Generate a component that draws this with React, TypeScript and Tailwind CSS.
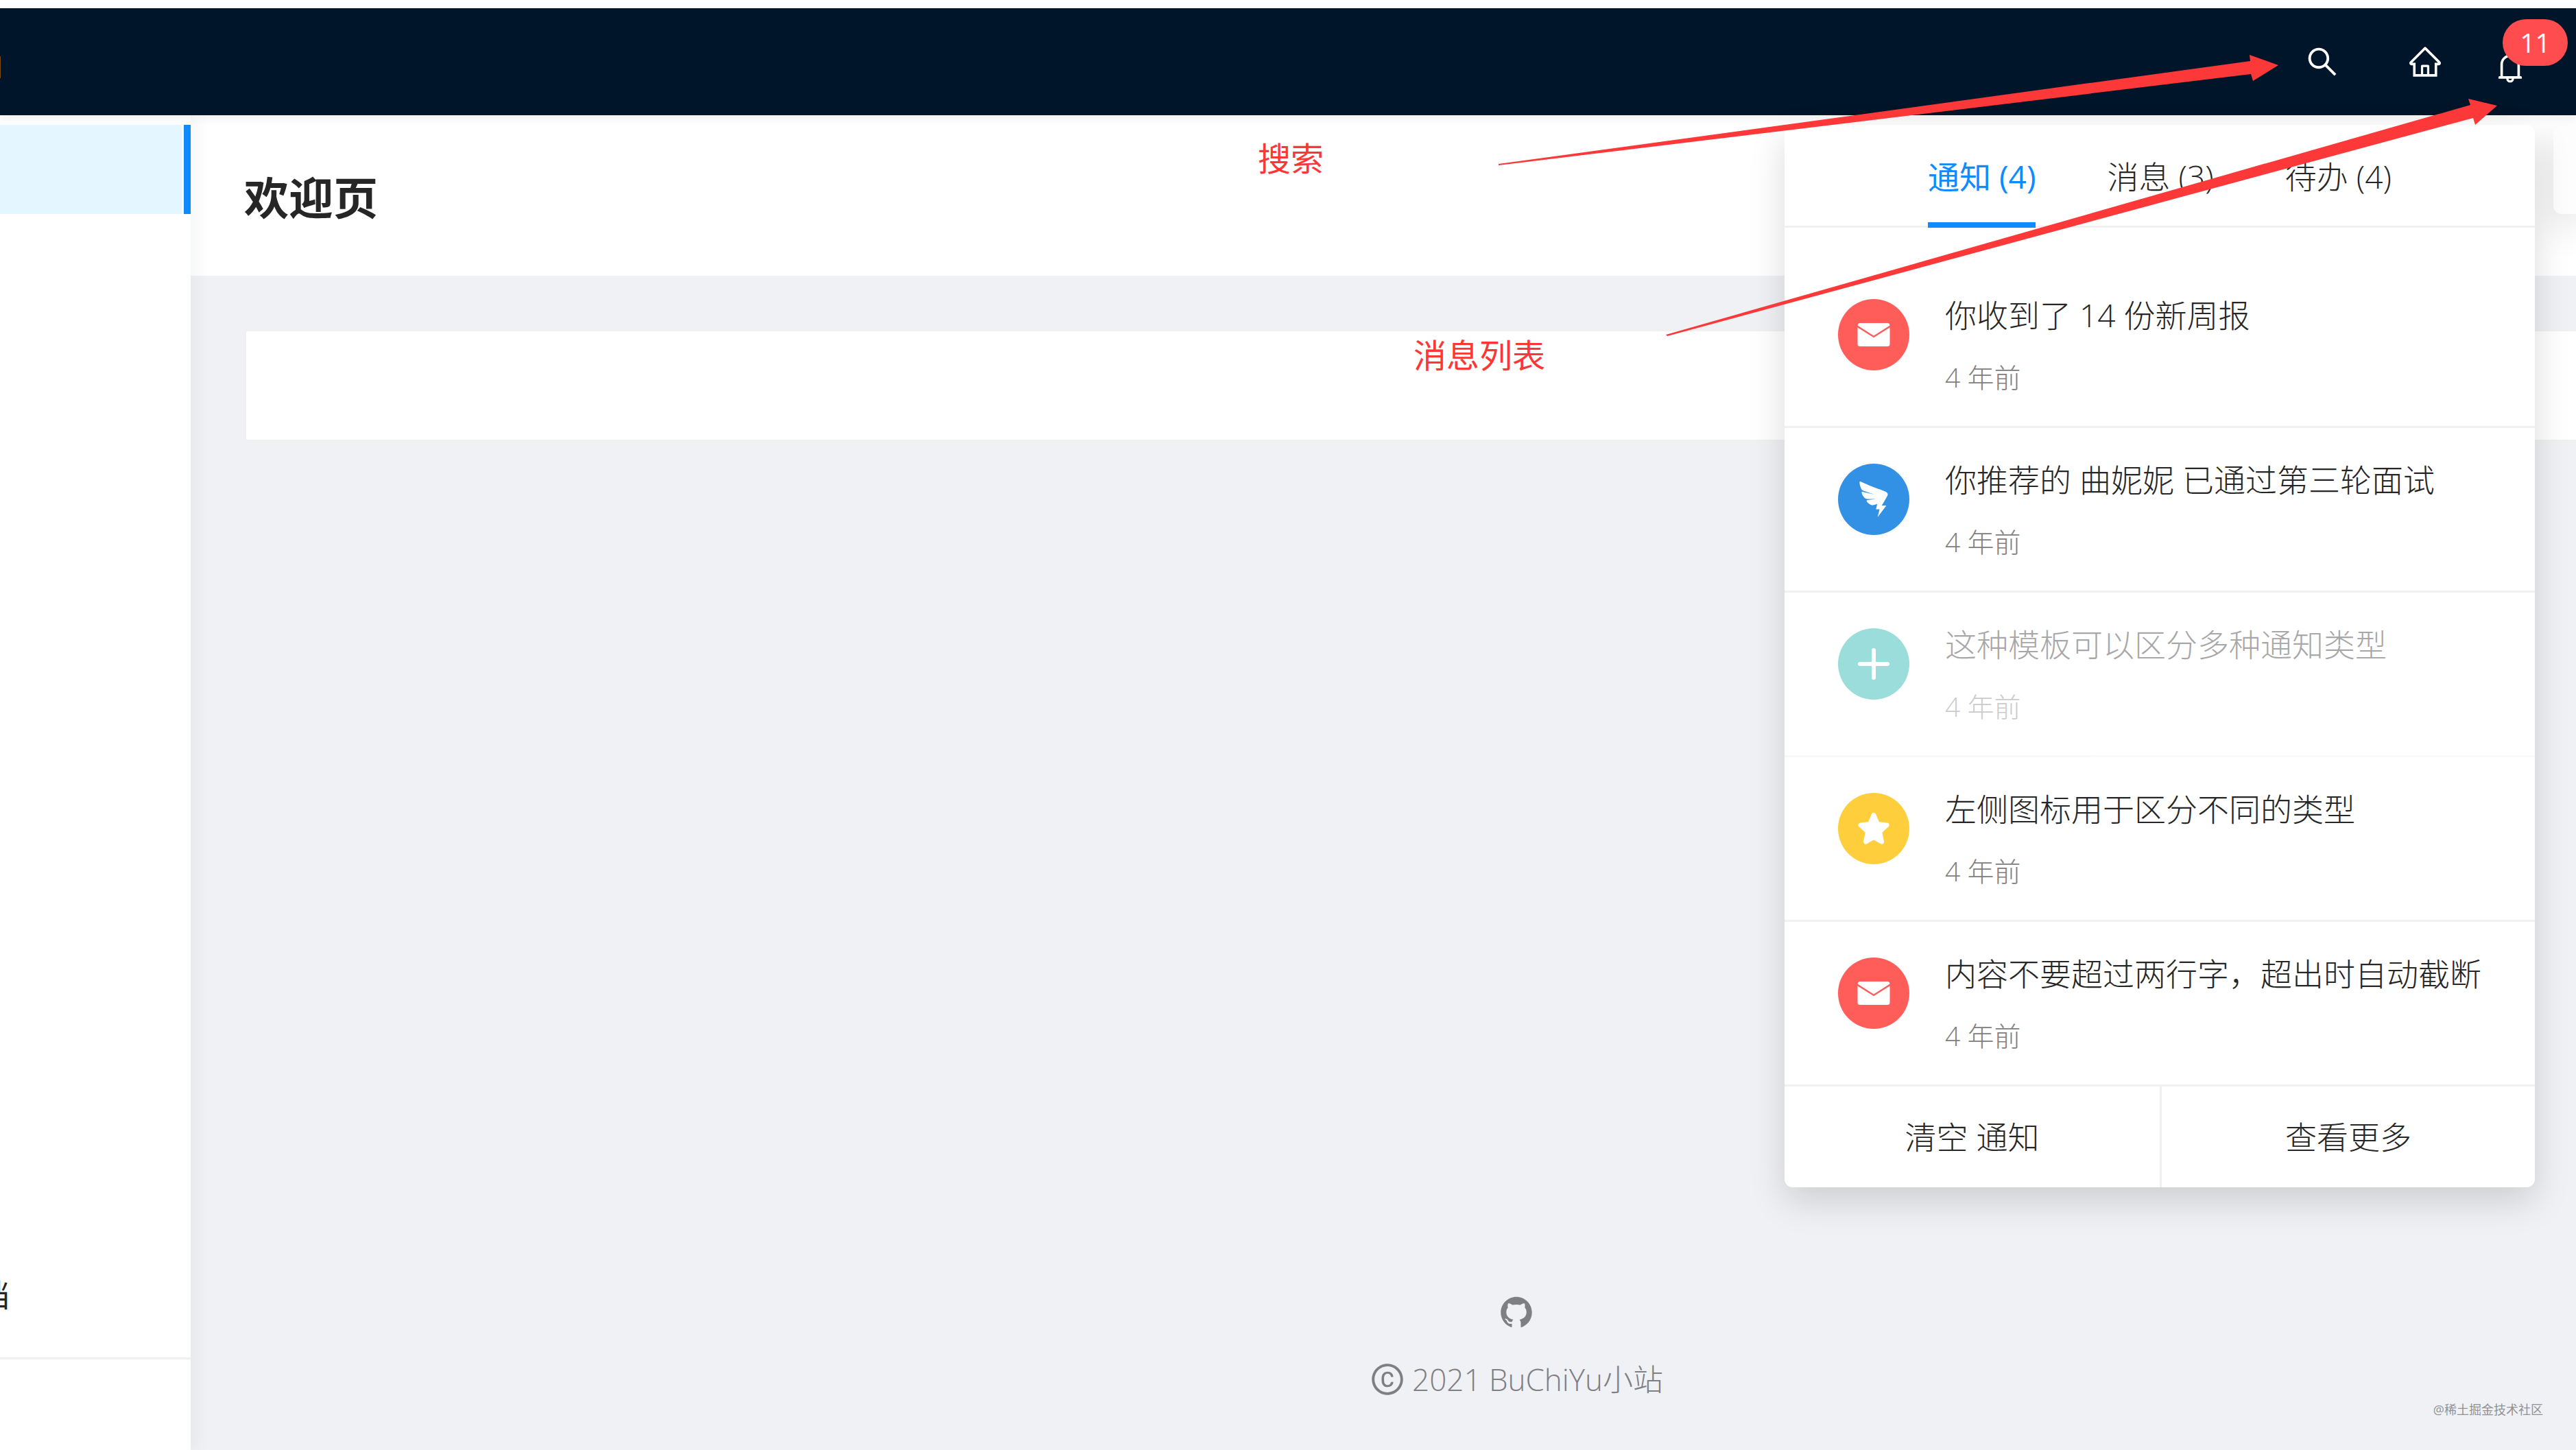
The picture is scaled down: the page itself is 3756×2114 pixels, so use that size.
import React from 'react';
import {
  AiFillGithub,
  AiOutlineBell,
  AiOutlineCopyright,
  AiOutlineDingding,
  AiOutlineHome,
  AiOutlineSearch,
} from 'react-icons/ai';

const MailIcon = () => (
  <svg viewBox="0 0 48 48" className="size-12" fill="#fff">
    <path d="M4 7h40a3.500 3.500 0 0 1 3.400 3.500L24 25.500 .6 10.500A3.500 3.500 0 0 1 4 7z" />
    <path d="M.5 13.500 24 28.300l23.500-14.800V37.500a3.500 3.500 0 0 1-3.500 3.500H4a3.500 3.500 0 0 1-3.500-3.500z" />
  </svg>
);

const PlusIcon = () => (
  <svg viewBox="0 0 48 48" className="size-12" stroke="#fff" strokeWidth="6" strokeLinecap="round">
    <path d="M24 4v40M4 24h40" />
  </svg>
);

const StarIcon = () => (
  <svg viewBox="0 0 48 48" className="size-12" fill="#fff" stroke="#fff" strokeWidth="7" strokeLinejoin="round">
    <path d="M24 4.500 29.500 17.500 43 19 32.500 28.500 35.500 43 24 36.500 12.500 43 15.500 28.500 5 19 18.500 17.500z" />
  </svg>
);

const DingIcon = () => <AiOutlineDingding className="size-16 text-white" />;

type Notice = {
  id: number;
  title: string;
  time: string;
  color: string;
  icon: React.FC;
  read?: boolean;
};

const notices: Notice[] = [
  { id: 1, title: '你收到了 14 份新周报', time: '4 年前', color: 'bg-[#ff5d5a]', icon: MailIcon },
  { id: 2, title: '你推荐的 曲妮妮 已通过第三轮面试', time: '4 年前', color: 'bg-[#3391e5]', icon: DingIcon },
  { id: 3, title: '这种模板可以区分多种通知类型', time: '4 年前', color: 'bg-[#05aca7]', icon: PlusIcon, read: true },
  { id: 4, title: '左侧图标用于区分不同的类型', time: '4 年前', color: 'bg-[#ffce3d]', icon: StarIcon },
  { id: 5, title: '内容不要超过两行字，超出时自动截断', time: '4 年前', color: 'bg-[#ff5d5a]', icon: MailIcon },
];

const tabs = ['通知 (4)', '消息 (3)', '待办 (4)'];

const NoticeItem: React.FC<{ notice: Notice }> = ({ notice }) => {
  const Icon = notice.icon;
  return (
    <li
      className={`flex gap-[52px] border-b-[3px] border-[#f0f0f0] px-[78px] pt-[39px] pb-[41px] last:border-b-0 ${
        notice.read ? 'opacity-40' : ''
      }`}
    >
      <span className={`mt-[13px] flex size-[104px] shrink-0 items-center justify-center rounded-full ${notice.color}`}>
        <Icon />
      </span>
      <div>
        <h4 className="mb-[25px] text-[46px] leading-[72px] font-light whitespace-nowrap text-[#262626]">{notice.title}</h4>
        <p className="text-[39px] leading-[60px] font-light text-[#808080]">{notice.time}</p>
      </div>
    </li>
  );
};

const NoticePanel = () => (
  <section className="absolute top-[182px] right-[60px] z-20 w-[1094px] rounded-xl bg-white shadow-[0_20px_52px_rgba(0,0,0,0.15)]">
    <nav className="flex justify-center gap-[104px] border-b-[3px] border-[#f0f0f0]">
      {tabs.map((tab, i) => (
        <button
          key={tab}
          className={`-mb-[3px] border-b-8 pt-[39px] pb-[31px] text-[46px] leading-[72px] ${
            i === 0 ? 'border-[#0d8bff] text-[#0d8bff]' : 'border-transparent font-light text-[#262626]'
          }`}
        >
          {tab}
        </button>
      ))}
    </nav>
    <ul className="pt-[52px]">
      {notices.map((n) => (
        <NoticeItem key={n.id} notice={n} />
      ))}
    </ul>
    <div className="grid grid-cols-2 border-t-[3px] border-[#f0f0f0] text-[46px] leading-[147px] font-light text-[#262626]">
      <button>清空 通知</button>
      <button className="border-l-[3px] border-[#f0f0f0]">查看更多</button>
    </div>
  </section>
);

const Header = () => (
  <header className="relative z-10 mt-3 flex h-[156px] items-center justify-between bg-[#001529] text-white shadow-[0_3px_13px_rgba(0,21,41,0.08)]">
    <span className="mt-4 h-8 w-px bg-[#7a4a10]" />
    <div className="flex items-center pr-[70px]">
      <button aria-label="搜索" className="mr-[98px]">
        <AiOutlineSearch className="size-[52px]" />
      </button>
      <a href="#home" aria-label="首页" className="mr-[72px]">
        <AiOutlineHome className="size-[52px]" />
      </a>
      <button aria-label="通知" className="relative pt-4">
        <AiOutlineBell className="size-[52px]" />
        <span className="absolute -top-7 left-[15px] w-[95px] rounded-full bg-[#ff4d4f] text-center text-[39px] leading-[68px] font-medium">
          11
        </span>
      </button>
    </div>
  </header>
);

const Sider = () => (
  <aside className="z-[5] flex w-[278px] shrink-0 flex-col bg-white pt-3.5 shadow-[7px_0_26px_rgba(29,35,41,0.05)]">
    <a href="#welcome" aria-label="欢迎页" className="flex h-[130px] justify-end gap-[3px]">
      <span className="flex-1 bg-[#e4f6ff]" />
      <span className="w-2.5 bg-[#0d8bff]" />
    </a>
    <div className="mt-auto border-b-[3px] border-[#f0f0f0] pb-14">
      <a href="#docs" className="flex w-3.5 justify-end overflow-hidden text-[46px] leading-[72px] whitespace-nowrap text-[#262626]">
        文档
      </a>
    </div>
    <div className="h-[132px]" />
  </aside>
);

const Footer = () => (
  <footer className="mt-auto flex flex-col items-center pb-[67px] pl-[388px] text-[#7e7f82]">
    <a href="#github" aria-label="GitHub">
      <AiFillGithub className="size-[52px]" />
    </a>
    <p className="mt-9 flex items-center gap-2.5 text-[44px] leading-[72px] font-light">
      <AiOutlineCopyright className="size-[52px]" />
      2021 BuChiYu小站
    </p>
  </footer>
);

// red hand-drawn notes over the page
const Annotations = () => (
  <div className="pointer-events-none absolute inset-0 z-30 text-5xl text-[#fd3636]">
    <span className="absolute top-[207px] left-[1834px]">搜索</span>
    <span className="absolute top-[494px] left-[2061px]">消息列表</span>
    <svg className="absolute top-0 left-0" width="3756" height="520" fill="#fc3838">
      <path d="M2185 239 3281 89 3280 80 3322 95 3285 118 3282 108 2185 241z" />
      <path d="M2429 488 3602 153 3599 144 3641 154 3609 182 3606 172 2431 490z" />
    </svg>
  </div>
);

export default function App() {
  return (
    <div className="relative flex min-h-screen flex-col overflow-hidden bg-white font-['Open_Sans','Noto_Sans_CJK_SC',sans-serif]">
      <Header />
      <div className="flex flex-1">
        <Sider />
        <div className="flex min-w-0 flex-1 flex-col bg-[#f0f1f5]">
          <div className="bg-white px-[78px] pt-[68px] pb-[62px]">
            <h1 className="text-[65px] leading-[104px] font-bold text-[#262626]">欢迎页</h1>
          </div>
          <main className="pt-[78px] pl-[78px]">
            <div className="h-[164px] rounded-l-md border-y-[3px] border-l-[3px] border-[#f0f0f0] bg-white" />
          </main>
          <Footer />
        </div>
      </div>
      <div className="absolute top-[182px] right-0 z-20 h-[130px] w-[33px] rounded-l-xl bg-[#fdfdfd] shadow-[0_20px_52px_rgba(0,0,0,0.15)]" />
      <NoticePanel />
      <Annotations />
      <span className="absolute right-12 bottom-[45px] text-lg text-[#8f9194]">@稀土掘金技术社区</span>
    </div>
  );
}
